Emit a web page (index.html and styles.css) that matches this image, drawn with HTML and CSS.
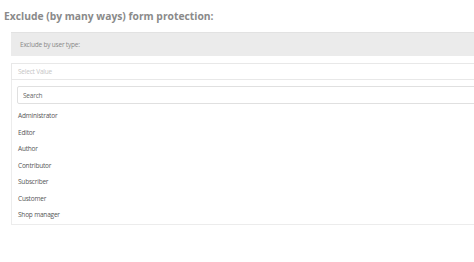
FILE: index.html
```html
<!DOCTYPE html>
<html lang="en">
<head>
    <meta charset="UTF-8">
    <title>Form protection</title>
    <link rel="stylesheet" href="styles.css">
</head>
<body>
    <h3 class="section-title">Exclude (by many ways) form protection:</h3>
    <div class="field">
        <div class="field-label">Exclude by user type:</div>
        <div class="select">
            <div class="select-value">Select Value</div>
            <div class="dropdown">
                <input class="search" type="text" placeholder="Search">
                <ul class="options">
                    <li>Administrator</li>
                    <li>Editor</li>
                    <li>Author</li>
                    <li>Contributor</li>
                    <li>Subscriber</li>
                    <li>Customer</li>
                    <li>Shop manager</li>
                </ul>
            </div>
        </div>
    </div>
</body>
</html>
```

FILE: styles.css
```css
body {
    margin: 0;
    padding: 0 0 0 4px;
    font-family: "Open Sans", Arial, sans-serif;
    background: #fff;
    overflow: hidden;
}
.section-title {
    margin: 0;
    padding-top: 9px;
    height: 23px;
    font-size: 10.3px;
    font-weight: bold;
    color: #8a8a8a;
}
.field {
    margin-left: 7px;
}
.field-label {
    height: 23px;
    line-height: 23px;
    padding-left: 9px;
    background: #ebebeb;
    border-top: 1px solid #e2e2e2;
    font-size: 6.5px;
    letter-spacing: -0.2px;
    color: #888;
}
.select {
    margin-top: 7px;
    width: 470px;
}
.select-value {
    height: 15px;
    line-height: 15px;
    padding-left: 6px;
    border: 1px solid #e8e8e8;
    font-size: 6.5px;
    letter-spacing: -0.2px;
    color: #c6c6c6;
}
.dropdown {
    border: 1px solid #ececec;
    border-top: none;
    padding: 6px 0 0 5px;
}
.search {
    display: block;
    box-sizing: border-box;
    width: 100%;
    height: 18px;
    margin: 0;
    padding: 0 5px;
    border: 1px solid #e0e0e0;
    border-radius: 2px;
    font-family: inherit;
    font-size: 6.5px;
    letter-spacing: -0.2px;
    outline: none;
}
.search::placeholder {
    color: #666;
}
.options {
    list-style: none;
    margin: 4px 0 0;
    padding: 0 0 0 1px;
}
.options li {
    height: 16.5px;
    line-height: 16.5px;
    font-size: 6.5px;
    letter-spacing: -0.2px;
    color: #555;
}
```
